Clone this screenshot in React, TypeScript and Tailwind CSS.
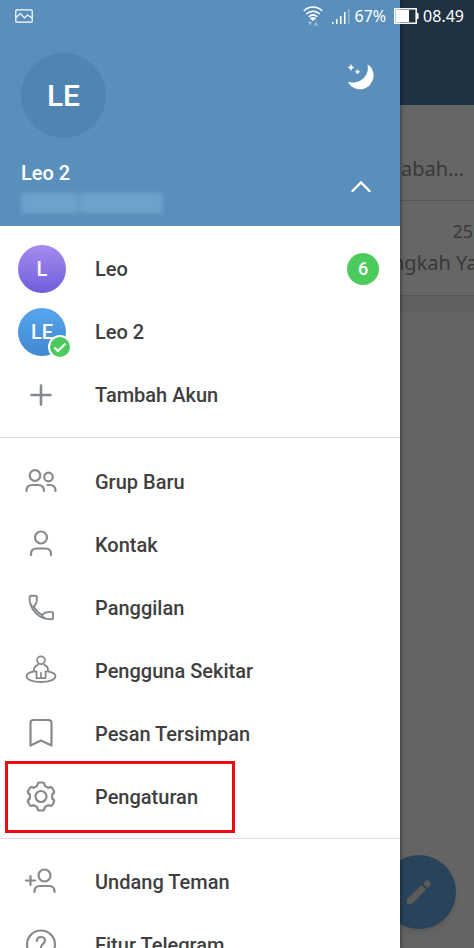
import React from "react"

interface IconProps {
  className?: string
}

function Icon({ className, children }: IconProps & { children: React.ReactNode }) {
  return (
    <svg
      viewBox="0 0 32 32"
      width={32}
      height={32}
      fill="none"
      stroke="currentColor"
      strokeWidth={2.2}
      strokeLinecap="round"
      strokeLinejoin="round"
      aria-hidden="true"
      className={className}
    >
      {children}
    </svg>
  )
}

function PlusIcon() {
  return (
    <Icon>
      <path d="M16 6.5v19M6.5 16h19" strokeWidth="2.6" />
    </Icon>
  )
}

function GroupIcon() {
  return (
    <Icon>
      <circle cx="10" cy="9.5" r="5.3" />
      <circle cx="23.500" cy="11" r="4.300" />
      <path d="M1.500 25c0-4 2-6 5.500-6h6c3.500 0 6 2 6 6M22.500 19H25c3.500 0 5.500 2 5.500 6" />
    </Icon>
  )
}

function ContactIcon() {
  return (
    <Icon>
      <circle cx="16" cy="8.500" r="6" />
      <path d="M6 26v-1c0-3.500 2-5.500 5.500-5.500h9c3.500 0 5.500 2 5.500 5.500v1" />
    </Icon>
  )
}

function PhoneIcon() {
  return (
    <Icon className="[stroke-width:1.9]">
      <path d="M4.500 5.500c0-1 .6-1.700 1.600-1.700h4.100c1 0 1.700.6 1.700 1.600.1 2.500-.1 4.500-.8 6.100-.4.900-1.200 1.700-2.300 3.200 1.800 3.300 5 6.500 8.300 8.300 1.500-1.100 2.300-1.900 3.200-2.300 1.600-.7 3.600-.9 6.100-.8 1 0 1.600.7 1.600 1.700v4.100c0 1-.7 1.600-1.700 1.600C14 27.300 4.500 18 4.500 5.500z" />
      <path d="M5.800 12.300c.7 1.700 1.900 2.700 3 2.400M17.100 23c-.3 1.100.7 2.300 2.400 3" />
    </Icon>
  )
}

function NearbyIcon() {
  return (
    <Icon className="[stroke-width:1.800]">
      <circle cx="16" cy="5.300" r="3.900" />
      <path d="M12.800 9.800c-2.600.9-3.800 2.900-3.800 5.200 0 1.600 1.300 2 2.500 1.500v6.700h9v-6.700c1.200.5 2.500.1 2.500-1.500 0-2.300-1.200-4.300-3.800-5.200" />
      <path d="M16 18v5" />
      <path d="M8.500 16.500c-4.200.8-7 2.500-7 4.700 0 3.300 6 5.800 14.500 5.800s14.500-2.500 14.500-5.800c0-2.200-2.800-3.900-7-4.700" />
    </Icon>
  )
}

function BookmarkIcon() {
  return (
    <Icon>
      <path d="M5.500 5c0-2 1-3 3-3h15c2 0 3 1 3 3v22.500l-10.500-5-10.500 5z" />
    </Icon>
  )
}

function GearIcon() {
  return (
    <Icon>
      <circle cx="16" cy="15.500" r="5.500" />
      <path
        transform="translate(0 -.5)"
        d="M12.100 5.400Q12.400 2 14.600 2H17.400Q19.600 2 19.900 5.400Q21.700 6.200 23.300 7.300Q26.300 5.900 27.400 7.800L28.800 10.200Q29.900 12.100 27.100 14Q27.300 16 27.100 18Q29.900 19.900 28.800 21.800L27.400 24.200Q26.300 26.100 23.300 24.700Q21.700 25.800 19.900 26.600Q19.600 30 17.400 30H14.600Q12.400 30 12.100 26.600Q10.300 25.800 8.700 24.700Q5.700 26.100 4.600 24.200L3.200 21.800Q2.100 19.900 4.900 18Q4.700 16 4.900 14Q2.100 12.100 3.200 10.200L4.600 7.800Q5.700 5.900 8.700 7.300Q10.300 6.200 12.100 5.400Z"
      />
    </Icon>
  )
}

function InviteIcon() {
  return (
    <Icon>
      <circle cx="19.500" cy="9.500" r="6" />
      <path d="M9.500 26v-.5c0-3.500 2-5.500 5.500-5.500h9c3.500 0 5.500 2 5.500 5.500v.5M5.500 10v9M1 14.500h9" />
    </Icon>
  )
}

function HelpIcon() {
  return (
    <Icon>
      <circle cx="16" cy="15.500" r="14" />
      <path d="M12 12c0-5.500 8-5 8-.5 0 3-4 3.500-4 7M16 22.500v.3" />
    </Icon>
  )
}

const MENU = [
  { label: "Grup Baru", icon: GroupIcon },
  { label: "Kontak", icon: ContactIcon },
  { label: "Panggilan", icon: PhoneIcon },
  { label: "Pengguna Sekitar", icon: NearbyIcon },
  { label: "Pesan Tersimpan", icon: BookmarkIcon },
  { label: "Pengaturan", icon: GearIcon, highlighted: true },
]

const MORE = [
  { label: "Undang Teman", icon: InviteIcon },
  { label: "Fitur Telegram", icon: HelpIcon },
]

interface RowProps {
  label: string
  lead: React.ReactNode
  badge?: number
  highlighted?: boolean
}

function Row({ label, lead, badge, highlighted }: RowProps) {
  return (
    <li className="relative">
      <button type="button" className="flex h-[63px] w-full items-center pr-[21px] text-left">
        <span className="flex w-[95px] shrink-0 items-center pl-[18px] text-[#868a8e]">
          {lead}
        </span>
        <span className="flex-1 text-xl font-medium text-[#3f3f3f]">{label}</span>
        {badge && (
          <span className="flex size-8 items-center justify-center rounded-full bg-[#4bcb5c] text-lg font-medium text-white">
            {badge}
          </span>
        )}
      </button>
      {highlighted && (
        <span className="pointer-events-none absolute -top-1 left-[5px] h-[72px] w-[230px] border-3 border-[#ee0b10]" />
      )}
    </li>
  )
}

function StatusBar() {
  return (
    <div className="absolute inset-x-0 top-0 z-20 flex h-8 items-center pr-[10px] pl-[15px] font-['Noto_Sans',sans-serif] text-base text-white">
      <svg width="18" height="14" viewBox="0 0 18 14" fill="none" stroke="currentColor" strokeWidth="1.200" aria-hidden="true">
        <rect x=".8" y=".8" width="16.400" height="12.400" rx="1" />
        <path d="M1 8.500l4.500-4 4 4.500 3-3L17 9" />
      </svg>
      <span className="flex-1" />
      <svg width="20" height="20" viewBox="0 0 20 20" fill="none" stroke="currentColor" strokeWidth="1.500" aria-hidden="true">
        <path d="M.8 5C6-.2 14-.2 19.200 5M3.300 8c3.800-3.700 9.600-3.700 13.400 0M5.800 10.800c2.500-2.300 5.900-2.300 8.400 0" />
        <path d="M6.800 12.200c2-1.600 4.400-1.600 6.400 0L10 15z" fill="currentColor" stroke="none" />
        <path d="M5 15.800h4l-2 3.700zM11 19.500h4l-2-3.700z" fill="#a3c4df" stroke="none" />
      </svg>
      <svg width="19" height="17" viewBox="0 0 19 17" className="ml-2" aria-hidden="true">
        <path d="M1 14h1.500v2H1zM5 11h1.500v5H5zM9 8h1.500v8H9zM13 4h1.500v12H13z" fill="currentColor" />
        <path d="M17 1h1.500v15H17z" fill="#8fb4d3" />
      </svg>
      <span className="ml-1">67%</span>
      <svg width="25" height="16" viewBox="0 0 25 16" className="ml-2" aria-hidden="true">
        <rect x=".8" y=".8" width="21.400" height="14.400" fill="none" stroke="currentColor" strokeWidth="1.500" />
        <path d="M2 2h13v12H2zM23 5h1.500v6H23z" fill="currentColor" />
      </svg>
      <span className="ml-1">08.49</span>
    </div>
  )
}

function ChatList() {
  return (
    <main className="flex h-full flex-col bg-[#fbfbfb] text-right font-['Noto_Sans',sans-serif] text-xl text-[#8e8e8e]">
      <header className="h-[105px] shrink-0 bg-[#527da3]" />
      <div className="h-[96px] shrink-0 border-b border-[#d8d8d8] bg-white pt-[50px] pr-[10px]">
        <p>abah…</p>
      </div>
      <div className="flex h-[95px] shrink-0 flex-col border-b border-[#d8d8d8] bg-white pt-4 whitespace-nowrap">
        <p className="pr-px text-lg">25</p>
        <p className="mt-1 pl-[392px] text-left">ngkah Ya</p>
      </div>
      <div className="h-4 shrink-0 bg-[#efefef]" />
      <button
        type="button"
        aria-label="Pesan baru"
        className="absolute right-[18px] bottom-[19px] flex size-[74px] items-center justify-center rounded-full bg-[#65a9e0] shadow-md"
      >
        <svg width="26" height="26" viewBox="0 0 26 26" fill="#e0e0e0" aria-hidden="true">
          <path d="M1 20L15.500 6l4.500 4.500L6 25H1z" />
          <path d="M17 4.500l2.500-2.700c1-1 2.200-1 3.200 0l1.500 1.500c1 1 1 2.200 0 3.200L21.500 9z" />
        </svg>
      </button>
    </main>
  )
}

function Drawer() {
  return (
    <aside className="absolute inset-y-0 right-[74px] left-0 z-10 overflow-hidden bg-white shadow-[0_0_5px_rgba(0,0,0,0.6)]">
      <header className="flex h-[226px] justify-between bg-[#5a8fbc] pr-[26px] pl-[21px] text-white">
        <div className="flex flex-col pt-[53px]">
          <div className="flex size-[85px] items-center justify-center rounded-full bg-[#5085b1] text-3xl font-medium">
            LE
          </div>
          <p className="mt-[21px] text-xl font-medium">Leo 2</p>
          <div className="mt-[6px] flex h-5 w-[142px] gap-1 bg-[#6498c4] blur-[2px]">
            <span className="w-14 bg-[#6ea1cb]" />
            <span className="flex-1 bg-[#6ea1cb]" />
          </div>
        </div>
        <div className="flex flex-col items-center justify-between pt-[64px] pb-[29px]">
          <button type="button" aria-label="Mode malam">
            <svg width="26" height="26" viewBox="0 0 26 26" fill="currentColor" aria-hidden="true">
              <path d="M19.500.5C24 3 26.500 8.500 25.300 14 23.800 21 17.500 26 11 25.300 6 24.700 2 22 0 18c7 1.500 13.500-.5 17-5.500 2.500-3.500 3.500-7.500 2.500-12z" />
              <path d="M3 .5l.9 2.100 2.100.9-2.100.9L3 6.500l-.9-2.100L0 3.500l2.100-.9zM9.500 5.500l.7 1.600 1.600.7-1.600.7-.7 1.600-.7-1.600-1.600-.7 1.600-.7z" stroke="currentColor" strokeWidth=".5" />
            </svg>
          </button>
          <button type="button" aria-label="Sembunyikan akun">
            <svg width="20" height="20" viewBox="0 0 20 20" fill="none" stroke="currentColor" strokeWidth="2.400" strokeLinecap="round" aria-hidden="true">
              <path d="M1.500 14L10 5.500l8.500 8.500" />
            </svg>
          </button>
        </div>
      </header>

      <nav>
        <ul className="border-b border-[#dcdfe1] py-[11px]">
          <Row
            label="Leo"
            badge={6}
            lead={
              <span className="flex size-12 items-center justify-center rounded-full bg-linear-to-b from-[#a78bee] to-[#6f5edb] text-xl font-medium text-white">
                L
              </span>
            }
          />
          <Row
            label="Leo 2"
            lead={
              <span className="relative flex size-12 items-center justify-center rounded-full bg-linear-to-b from-[#56a6ee] to-[#4088cf] text-xl font-medium text-white">
                LE
                <span className="absolute -right-[6px] -bottom-[3px] flex size-6 items-center justify-center rounded-full border-2 border-white bg-[#4bcb5c]">
                  <svg width="14" height="12" viewBox="0 0 14 12" fill="none" stroke="currentColor" strokeWidth="2.200" aria-hidden="true">
                    <path d="M1.500 6.500l3.500 3.500 7.500-7.500" />
                  </svg>
                </span>
              </span>
            }
          />
          <Row label="Tambah Akun" lead={<span className="pl-[7px]"><PlusIcon /></span>} />
        </ul>
        <ul className="border-b border-[#dcdfe1] pt-3 pb-[10px]">
          {MENU.map((item) => (
            <Row
              key={item.label}
              label={item.label}
              highlighted={item.highlighted}
              lead={<span className="pl-[7px]"><item.icon /></span>}
            />
          ))}
        </ul>
        <ul className="pt-[11px]">
          {MORE.map((item) => (
            <Row key={item.label} label={item.label} lead={<span className="pl-[7px]"><item.icon /></span>} />
          ))}
        </ul>
      </nav>
    </aside>
  )
}

export default function App() {
  return (
    <div className="relative h-screen overflow-hidden font-[Roboto,sans-serif]">
      <ChatList />
      <div className="absolute inset-0 bg-black/60" />
      <Drawer />
      <StatusBar />
    </div>
  )
}
